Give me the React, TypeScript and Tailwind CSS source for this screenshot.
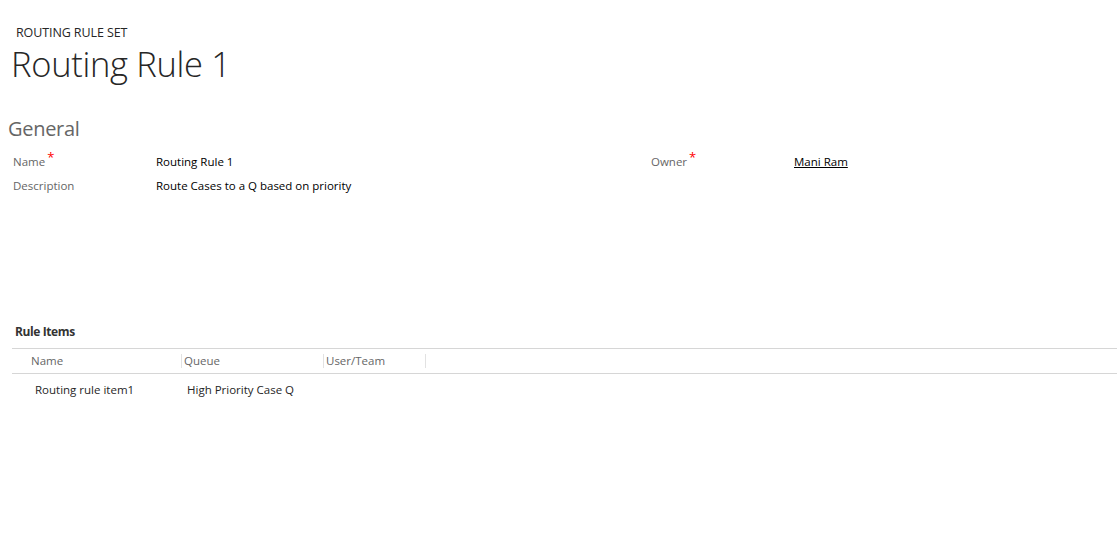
import React from "react";

const font = { fontFamily: '"Open Sans", "Noto Sans", sans-serif' };

function Field({ label, required, value, link }: { label: string; required?: boolean; value: string; link?: boolean }) {
  return (
    <div className="flex items-center h-[24px]">
      <div className="w-[143px] text-[11.5px] text-[#666666] flex items-start">
        <span>{label}</span>
        {required && <span className="text-[#ff0000] text-[13px] leading-[12px] ml-[2px] -mt-[2px]">*</span>}
      </div>
      <div className={link ? "text-[11.5px] text-black underline" : "text-[11.5px] text-black"}>{value}</div>
    </div>
  );
}

export default function App() {
  return (
    <div className="w-[1117px] h-[543px] bg-white overflow-hidden" style={font}>
      <div className="pl-[16px] pt-[25px] text-[12.5px] leading-[16px] text-[#262626] tracking-[-0.1px]">ROUTING RULE SET</div>
      <h1 className="pl-[11px] text-[34.5px] leading-[46px] text-[#262626] font-light tracking-[-0.3px]">Routing Rule 1</h1>

      <h2 className="pl-[8px] mt-[28px] text-[20px] leading-[28px] text-[#666666] tracking-[-0.3px]">General</h2>

      <div className="flex mt-[7px] pl-[13px]">
        <div className="w-[638px]">
          <Field label="Name" required value="Routing Rule 1" />
          <Field label="Description" value="Route Cases to a Q based on priority" />
        </div>
        <div>
          <Field label="Owner" required value="Mani Ram" link />
        </div>
      </div>

      <div className="pl-[15px] mt-[126px] text-[12px] leading-[16px] font-bold text-[#333333] tracking-[-0.4px]">Rule Items</div>

      <div className="ml-[12px] mt-[8px] border-t border-[#d6d6d6]">
        <div className="flex items-center h-[25px] border-b border-[#d6d6d6] text-[11.5px] text-[#666666]">
          <div className="w-[169px] pl-[19px]">Name</div>
          <div className="w-[142px] pl-[2px] border-l border-[#e2e2e2] h-[14px] flex items-center">Queue</div>
          <div className="w-[102px] pl-[2px] border-l border-[#e2e2e2] h-[14px] flex items-center">User/Team</div>
          <div className="border-l border-[#e2e2e2] h-[14px]" />
        </div>
        <div className="flex items-center h-[32px] text-[11.5px] text-[#262626]">
          <div className="w-[175px] pl-[23px]">Routing rule item1</div>
          <div>High Priority Case Q</div>
        </div>
      </div>
    </div>
  );
}
